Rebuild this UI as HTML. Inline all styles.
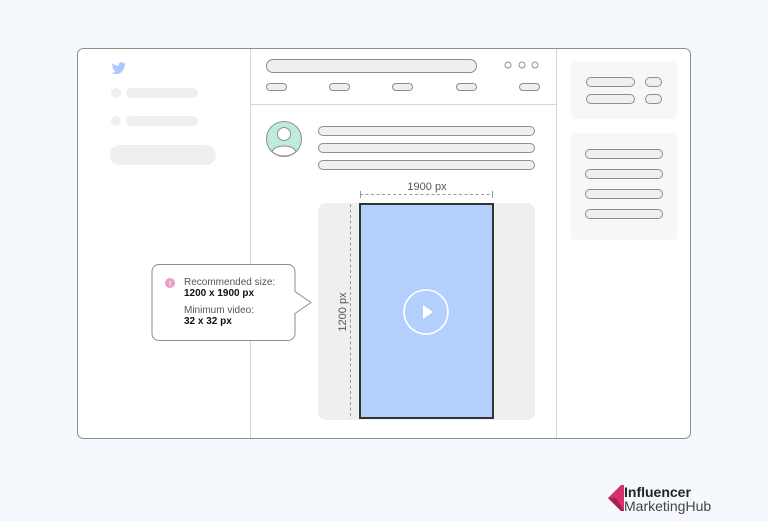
<!DOCTYPE html>
<html><head><meta charset="utf-8"><style>
body{margin:0;width:768px;height:516px;background:#f5f8fc;overflow:hidden;font-family:"Liberation Sans",sans-serif}
</style></head><body>
<svg width="768" height="516" viewBox="0 0 768 516" xmlns="http://www.w3.org/2000/svg" font-family="Liberation Sans, sans-serif">
<rect x="77.5" y="48.5" width="613" height="390" rx="6" fill="#fff" stroke="#8e8e8e"/>
<line x1="250.5" y1="49" x2="250.5" y2="438" stroke="#d6d6d6"/>
<line x1="556.5" y1="49" x2="556.5" y2="438" stroke="#d6d6d6"/>
<line x1="251" y1="104.5" x2="556" y2="104.5" stroke="#d6d6d6"/>
<!-- left -->
<path d="M113 63.5c1.6 1.6 3.6 2.5 5.6 2.6-.4-2 1-3.8 3-3.8.9 0 1.6.4 2.1.9.7-.1 1.3-.4 1.8-.7-.2.7-.7 1.2-1.2 1.6.6-.1 1.1-.2 1.6-.4-.4.6-.9 1.100-1.400 1.500v.4c0 3.900-3 8.400-8.400 8.400-1.700 0-3.200-.5-4.500-1.300 1.600.2 3.200-.3 4.400-1.200-1.300 0-2.400-.9-2.700-2 .4.1.9.1 1.300 0-1.300-.3-2.300-1.500-2.300-2.900.4.2.800.3 1.300.4-1.300-.9-1.600-2.500-.9-3.500z" fill="#a9c8fb"/>
<circle cx="116" cy="93" r="5" fill="#efefef"/><rect x="126" y="88" width="72" height="10" rx="5" fill="#efefef"/>
<circle cx="116" cy="121" r="5" fill="#efefef"/><rect x="126" y="116" width="72" height="10" rx="5" fill="#efefef"/>
<rect x="110" y="145" width="106" height="20" rx="10" fill="#efefef"/>
<!-- top bar -->
<g fill="#efefef" stroke="#8e8e8e">
<rect x="266.5" y="59.5" width="210" height="13" rx="6.5"/>
<rect x="266.5" y="83.5" width="20" height="7" rx="3.5"/>
<rect x="329.5" y="83.5" width="20" height="7" rx="3.5"/>
<rect x="392.5" y="83.5" width="20" height="7" rx="3.5"/>
<rect x="456.5" y="83.5" width="20" height="7" rx="3.5"/>
<rect x="519.5" y="83.5" width="20" height="7" rx="3.5"/>
<rect x="318.5" y="126.5" width="216" height="9" rx="4.5"/>
<rect x="318.5" y="143.5" width="216" height="9" rx="4.5"/>
<rect x="318.5" y="160.5" width="216" height="9" rx="4.5"/>
</g>
<g fill="none" stroke="#8e8e8e"><circle cx="508" cy="65" r="3"/><circle cx="522" cy="65" r="3"/><circle cx="535" cy="65" r="3"/></g>
<!-- avatar -->
<circle cx="284" cy="139" r="17.5" fill="#bfeadd" stroke="#8e8e8e"/>
<circle cx="284" cy="134" r="6.5" fill="#fff" stroke="#8e8e8e"/>
<path d="M272 151.5c2-4 7-5.5 12-5.5s10 1.5 12 5.5c-3 3-7.5 4.5-12 4.5s-9-1.5-12-4.5z" fill="#fff" stroke="#8e8e8e"/>
<!-- right -->
<rect x="571" y="62" width="106" height="57" rx="4" fill="#f7f7f7"/>
<g fill="#efefef" stroke="#8e8e8e">
<rect x="586.5" y="77.5" width="48" height="9" rx="4.5"/>
<rect x="645.5" y="77.5" width="16" height="9" rx="4.5"/>
<rect x="586.5" y="94.5" width="48" height="9" rx="4.5"/>
<rect x="645.5" y="94.5" width="16" height="9" rx="4.5"/>
</g>
<rect x="571" y="133" width="106" height="107" rx="4" fill="#f7f7f7"/>
<g fill="#efefef" stroke="#8e8e8e">
<rect x="585.5" y="149.5" width="77" height="9" rx="4.5"/>
<rect x="585.5" y="169.5" width="77" height="9" rx="4.5"/>
<rect x="585.5" y="189.5" width="77" height="9" rx="4.5"/>
<rect x="585.5" y="209.5" width="77" height="9" rx="4.5"/>
</g>
<!-- media -->
<text x="427" y="190" font-size="11" fill="#555" text-anchor="middle">1900 px</text>
<line x1="360" y1="194.5" x2="493" y2="194.5" stroke="#999" stroke-dasharray="3,2.5"/>
<line x1="360.5" y1="191" x2="360.5" y2="198" stroke="#999"/><line x1="492.5" y1="191" x2="492.5" y2="198" stroke="#999"/>
<rect x="318" y="203" width="217" height="217" rx="8" fill="#efefef"/>
<rect x="360" y="204" width="133" height="214" fill="#b3cffd" stroke="#333" stroke-width="2"/>
<line x1="350.5" y1="204" x2="350.5" y2="419" stroke="#999" stroke-dasharray="3,2.5"/>
<text transform="translate(346 312) rotate(-90)" font-size="11" fill="#555" text-anchor="middle">1200 px</text>
<circle cx="426" cy="312" r="22" fill="none" stroke="#fff" stroke-width="1.6"/>
<path d="M423 305v14l10-7z" fill="#fff"/>
<!-- tooltip -->
<path d="M159 264.5h129a7 7 0 0 1 7 7v20l16 11-16 11v20a7 7 0 0 1-7 7h-129a7 7 0 0 1-7-7v-62a7 7 0 0 1 7-7z" fill="#fff" stroke="#8e8e8e"/>
<circle cx="170" cy="283" r="5" fill="#e8a0c8"/>
<text x="170" y="286" font-size="7" fill="#fff" text-anchor="middle" font-weight="bold">!</text>
<text x="184" y="285" font-size="10" fill="#555">Recommended size:</text>
<text x="184" y="296" font-size="10" fill="#111" font-weight="bold">1200 x 1900 px</text>
<text x="184" y="313" font-size="10" fill="#555">Minimum video:</text>
<text x="184" y="324" font-size="10" fill="#111" font-weight="bold">32 x 32 px</text>
<!-- logo -->
<path d="M608 498l13-13h3v26h-3z" fill="#d4336a"/>
<path d="M608 498l13 13h3l-8-13z" fill="#a8204f"/>
<text x="624" y="497" font-size="14" font-weight="bold" fill="#222">Influencer</text>
<text x="624" y="511" font-size="14" fill="#444">MarketingHub</text>
</svg>
</body></html>
